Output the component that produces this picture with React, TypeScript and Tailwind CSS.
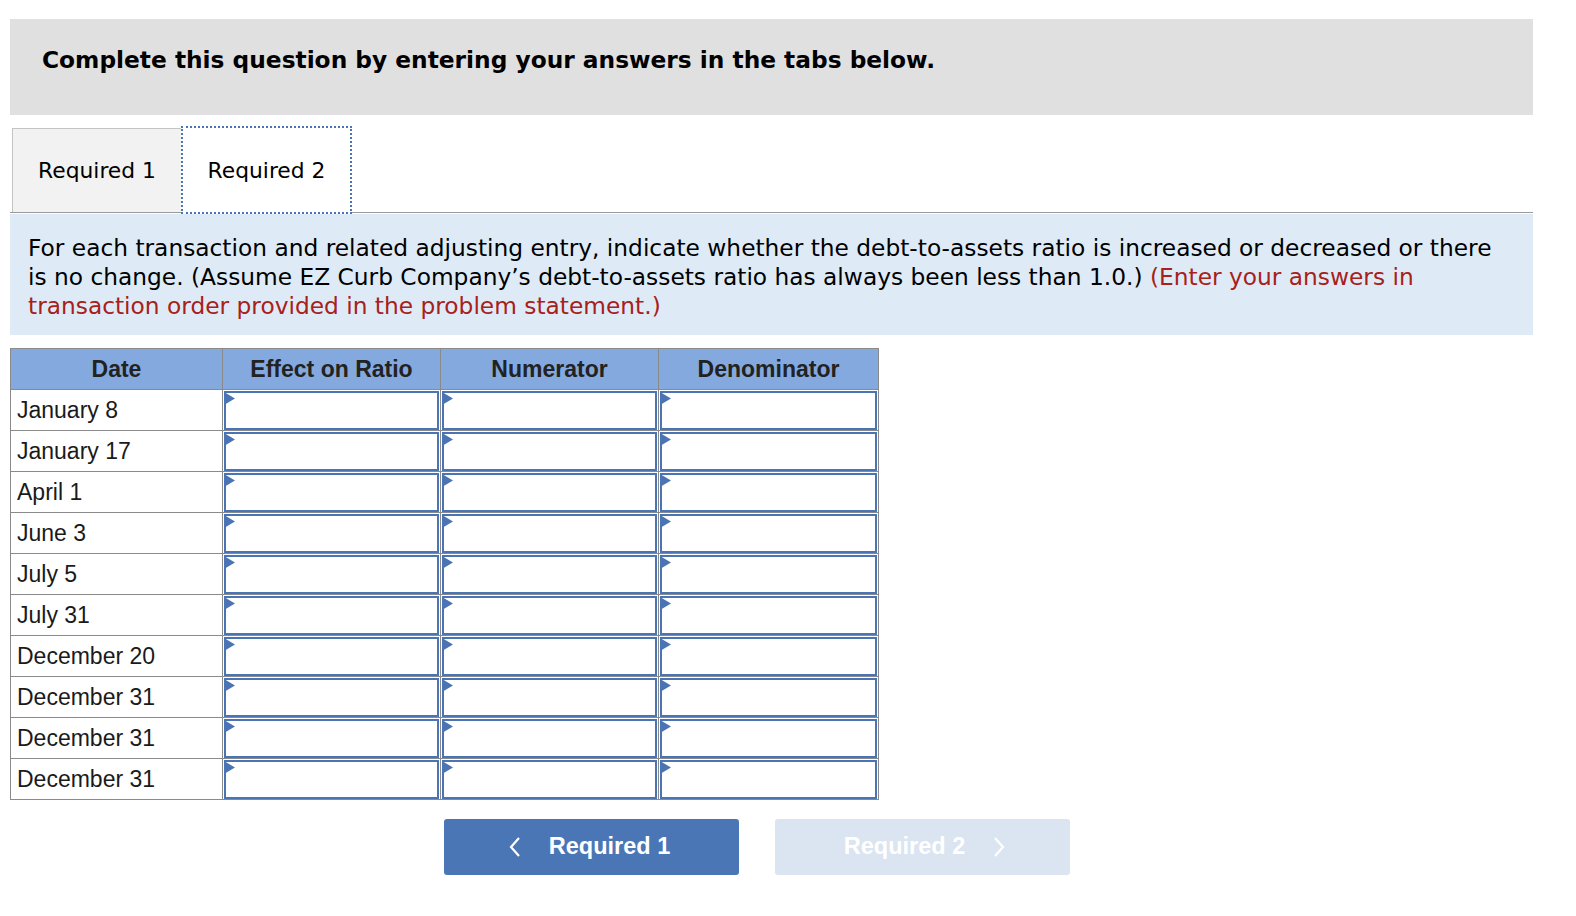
import React from "react";

const rows = [
  "January 8",
  "January 17",
  "April 1",
  "June 3",
  "July 5",
  "July 31",
  "December 20",
  "December 31",
  "December 31",
  "December 31",
];

function InputCell() {
  return (
    <td className="border border-[#8a8a8a] p-0 h-[41px]">
      <div className="relative mx-[1px] h-[39px] border-2 border-[#4a74b4] bg-white">
        <svg className="absolute left-[-2px] top-[-1px]" width="11" height="13" viewBox="0 0 11 13">
          <polygon points="0,0 11,6.5 0,13" fill="#4a74b4" />
        </svg>
      </div>
    </td>
  );
}

export default function App() {
  return (
    <div className="bg-white pt-[19px] pl-[10px] pb-[40px] overflow-hidden" style={{ fontFamily: '"DejaVu Sans", Verdana, sans-serif' }}>
      <div className="w-[1523px]">
        <div className="h-[96px] bg-[#e0e0e0] pl-[32px] pt-[29px]">
          <div className="text-[23.3px] font-bold leading-none text-black">
            Complete this question by entering your answers in the tabs below.
          </div>
        </div>

        <div className="mt-[11px] flex h-[87px] items-end border-b border-[#9a9a9a]">
          <div className="ml-[2px] flex h-[84px] w-[169px] items-center justify-center border-l border-t border-[#c4c4c4] bg-[#f2f2f2] pt-[2px] text-[21.8px] text-black">
            Required 1
          </div>
          <div className="relative mb-[-2px] flex h-[88px] w-[171px] items-center justify-center border-2 border-dotted border-[#4a74b4] bg-white pt-[2px] text-[21.8px] text-black">
            Required 2
          </div>
        </div>

        <div className="mt-[1px] bg-[#deebf7] pl-[18px] pr-[10px] pt-[19px] pb-[15px] text-[23.3px] leading-[29px] text-black">
          <span className="whitespace-nowrap">For each transaction and related adjusting entry, indicate whether the debt-to-assets ratio is increased or decreased or there</span>
          <br />
          <span className="whitespace-nowrap">
            is no change. (Assume EZ Curb Company’s debt-to-assets ratio has always been less than 1.0.){" "}
            <span className="text-[#a8201a]">(Enter your answers in</span>
          </span>
          <br />
          <span className="text-[#a8201a]">transaction order provided in the problem statement.)</span>
        </div>

        <table
          className="mt-[13px] border-collapse border border-[#8a8a8a] text-[23px] text-[#1a1a1a]"
          style={{ fontFamily: '"Liberation Sans", Arial, sans-serif' }}
        >
          <thead>
            <tr className="h-[41px] bg-[#84a9df]">
              <th className="w-[212px] border border-[#8a8a8a] font-bold text-[#222]">Date</th>
              <th className="w-[218px] border border-[#8a8a8a] font-bold text-[#222]">Effect on Ratio</th>
              <th className="w-[218px] border border-[#8a8a8a] font-bold text-[#222]">Numerator</th>
              <th className="w-[220px] border border-[#8a8a8a] font-bold text-[#222]">Denominator</th>
            </tr>
          </thead>
          <tbody>
            {rows.map((r, i) => (
              <tr key={i} className="h-[41px]">
                <td className="border border-[#8a8a8a] pl-[6px] leading-none">{r}</td>
                <InputCell />
                <InputCell />
                <InputCell />
              </tr>
            ))}
          </tbody>
        </table>

        <div
          className="mt-[19px] flex gap-[36px] pl-[434px]"
          style={{ fontFamily: '"Liberation Sans", Arial, sans-serif' }}
        >
          <button className="flex h-[56px] w-[295px] items-center justify-center gap-[28px] rounded-[3px] bg-[#4a76b5] text-[23.5px] font-bold text-white">
            <svg width="12" height="22" viewBox="0 0 12 22">
              <polyline points="10,2 2,11 10,20" fill="none" stroke="white" strokeWidth="2.2" />
            </svg>
            <span className="mr-[4px]">Required 1</span>
          </button>
          <button className="flex h-[56px] w-[295px] items-center justify-center gap-[28px] rounded-[3px] bg-[#dbe4f1] text-[23.5px] font-bold text-white">
            <span className="ml-[4px]">Required 2</span>
            <svg width="12" height="22" viewBox="0 0 12 22">
              <polyline points="2,2 10,11 2,20" fill="none" stroke="white" strokeWidth="2.2" />
            </svg>
          </button>
        </div>
      </div>
    </div>
  );
}
